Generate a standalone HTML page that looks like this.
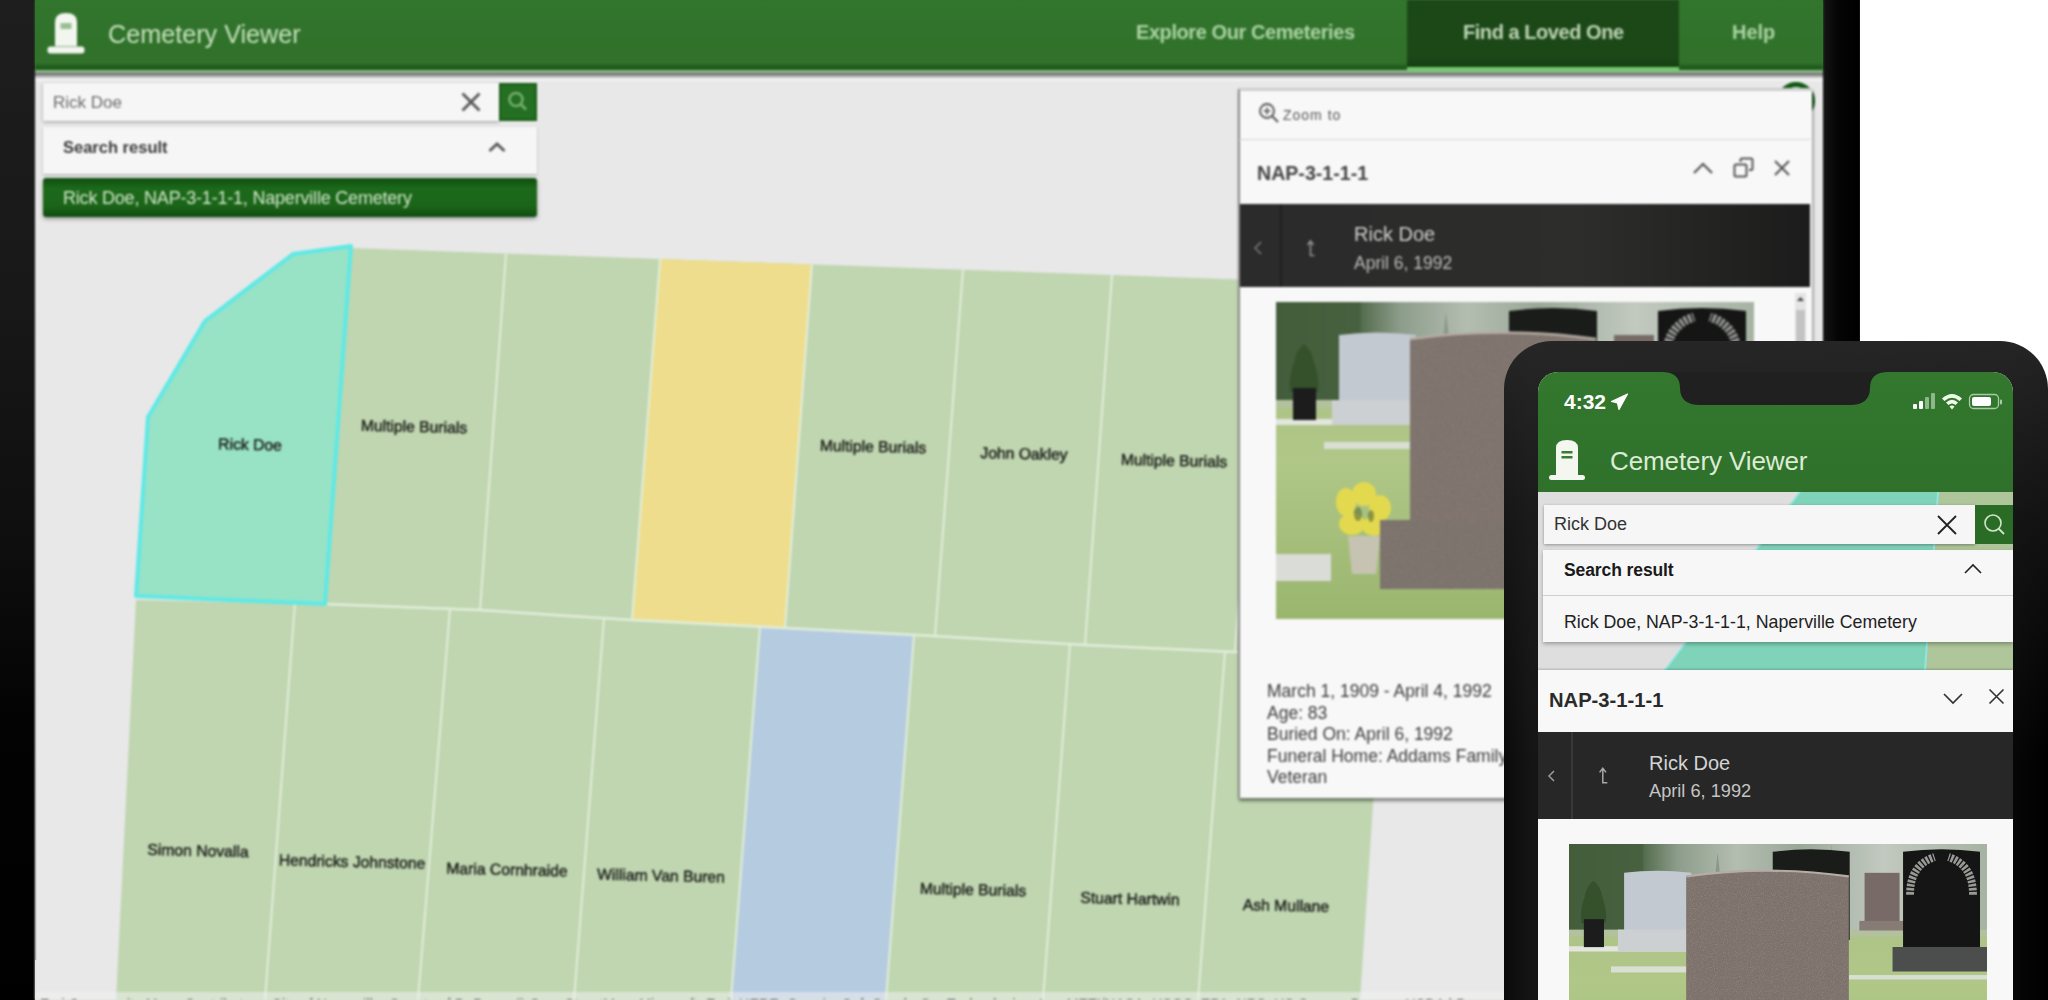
<!DOCTYPE html>
<html><head><meta charset="utf-8">
<style>
*{margin:0;padding:0;box-sizing:border-box}
html,body{width:2048px;height:1000px;overflow:hidden;background:#fff;font-family:"Liberation Sans",sans-serif}
.a{position:absolute}
#desk{left:0;top:0;width:1860px;height:1000px;background:#111}
#lbez{left:0;top:0;width:35px;height:1000px;background:linear-gradient(#1e1e1e 0%,#181818 30%,#0e0e0e 55%,#030303 72%,#000 100%)}
#rbez{left:1823px;top:0;width:36px;height:1000px;background:linear-gradient(90deg,#151515,#050505 40%,#000)}
#scr{left:35px;top:0;width:1788px;height:1000px;background:#e8e8e8;overflow:hidden;filter:blur(0.8px)}
#hdr{left:0;top:0;width:1788px;height:70px;background:linear-gradient(#32752d,#31712b 90%,#1e5a1a 96%)}
.nav{color:#acd4a4;font-weight:bold;font-size:20px;white-space:nowrap}
#tab{left:1372px;top:0;width:272px;height:71px;background:linear-gradient(#1c4818 85%,#143f12);border-bottom:4px solid #74c96e}
.txt{white-space:nowrap;line-height:1}
</style></head><body>
<div id="desk" class="a">
  <div id="lbez" class="a"></div>
  <div id="rbez" class="a"></div>
  <div class="a" style="left:35px;top:0;width:1788px;height:70px;background:#32752d"></div>
  <div class="a" style="left:35px;top:960px;width:1788px;height:40px;background:#d4e0cc"></div>
  <div id="scr" class="a">
    <!-- map -->
    <svg class="a" style="left:0;top:0" width="1788" height="1000" viewBox="35 0 1788 1000">
<polygon points="351.0,248.0 1420.0,285.9 1383.0,655.0 1360.0,1000.0 116.0,1000.0 136.0,600.0 325.0,604.0" fill="#bfd6b0"/>
<polygon points="660.0,259.0 812.0,264.4 785.0,628.0 632.0,620.0" fill="#eedd8d"/>
<polygon points="760.0,626.7 914.0,634.9 886.0,1000.0 731.0,1000.0" fill="#b5cbe0"/>
<line x1="506.0" y1="253.5" x2="480.0" y2="610.0" stroke="#e2eedb" stroke-width="2"/>
<line x1="660.0" y1="259.0" x2="632.0" y2="620.0" stroke="#e2eedb" stroke-width="2"/>
<line x1="812.0" y1="264.4" x2="785.0" y2="628.0" stroke="#e2eedb" stroke-width="2"/>
<line x1="963.0" y1="269.7" x2="935.0" y2="636.0" stroke="#e2eedb" stroke-width="2"/>
<line x1="1112.0" y1="275.0" x2="1085.0" y2="645.0" stroke="#e2eedb" stroke-width="2"/>
<line x1="1262.0" y1="280.3" x2="1235.0" y2="652.0" stroke="#e2eedb" stroke-width="2"/>
<line x1="295.0" y1="602.4" x2="265.0" y2="1000.0" stroke="#e2eedb" stroke-width="2"/>
<line x1="450.0" y1="608.8" x2="418.0" y2="1000.0" stroke="#e2eedb" stroke-width="2"/>
<line x1="604.0" y1="618.2" x2="574.0" y2="1000.0" stroke="#e2eedb" stroke-width="2"/>
<line x1="760.0" y1="626.7" x2="731.0" y2="1000.0" stroke="#e2eedb" stroke-width="2"/>
<line x1="914.0" y1="634.9" x2="886.0" y2="1000.0" stroke="#e2eedb" stroke-width="2"/>
<line x1="1070.0" y1="644.1" x2="1043.0" y2="1000.0" stroke="#e2eedb" stroke-width="2"/>
<line x1="1225.0" y1="651.5" x2="1198.0" y2="1000.0" stroke="#e2eedb" stroke-width="2"/>
<polyline points="136.0,594.0 325.0,604.0 480.0,610.0 632.0,620.0 785.0,628.0 935.0,636.0 1085.0,645.0 1235.0,652.0 1390.0,659.5" fill="none" stroke="#e2eedb" stroke-width="2.5"/>
<polygon points="293.0,254.0 351.0,246.0 325.0,604.0 136.0,596.0 148.0,417.0 205.0,321.0" fill="#98e2c6" stroke="#5fe9e6" stroke-width="4" stroke-linejoin="round"/>
<g font-family="Liberation Sans" font-size="15.7" fill="#1c1f1a" stroke="#1c1f1a" stroke-width="0.45" text-anchor="middle">
<text x="250" y="450" transform="rotate(1.3 250 445)">Rick Doe</text>
<text x="414" y="432" transform="rotate(1.3 414 427)">Multiple Burials</text>
<text x="873" y="452" transform="rotate(1.3 873 447)">Multiple Burials</text>
<text x="1024" y="459" transform="rotate(1.3 1024 454)">John Oakley</text>
<text x="1174" y="466" transform="rotate(1.3 1174 461)">Multiple Burials</text>
<text x="198" y="856" transform="rotate(1.3 198 851)">Simon Novalla</text>
<text x="352" y="867" transform="rotate(1.3 352 862)">Hendricks Johnstone</text>
<text x="507" y="875" transform="rotate(1.3 507 870)">Maria Cornhraide</text>
<text x="661" y="881" transform="rotate(1.3 661 876)">William Van Buren</text>
<text x="973" y="895" transform="rotate(1.3 973 890)">Multiple Burials</text>
<text x="1130" y="904" transform="rotate(1.3 1130 899)">Stuart Hartwin</text>
<text x="1286" y="911" transform="rotate(1.3 1286 906)">Ash Mullane</text>
</g>
    </svg>

    <div class="a" style="left:0;top:992px;width:1788px;height:10px;background:rgba(240,240,240,.55)"></div>
    <div class="a txt" style="left:5px;top:997px;font-size:14px;color:#5a5a5a;letter-spacing:0.2px">Esri Community Maps Contributors, City of Naperville, County of DuPage, &#169; OpenStreetMap, Microsoft, Esri, HERE, Garmin, SafeGraph, GeoTechnologies, Inc, METI/NASA, USGS, EPA, NPS, US Census Bureau, USDA | Powered by Esri</div>
    <!-- header shadow -->
    <div class="a" style="left:0;top:70px;width:1788px;height:3px;background:#8fb48a"></div>
    <div class="a" style="left:0;top:73px;width:1788px;height:5px;background:linear-gradient(#5f615f,#9a9a9a 50%,#dcdcdc)"></div>
    <div class="a" style="left:0;top:79px;width:1788px;height:2px;background:#f2f2f2"></div>
    <!-- search widget -->
    <div class="a" style="left:8px;top:83px;width:456px;height:38px;background:#f6f6f6;box-shadow:0 1px 3px rgba(0,0,0,.35)"></div>
    <div class="a txt" style="left:18px;top:94px;font-size:17px;color:#6b6b6b">Rick Doe</div>
    <svg class="a" style="left:424px;top:91px" width="24" height="22" viewBox="0 0 24 22"><path d="M3.5 2.5L20.5 19.5M20.5 2.5L3.5 19.5" stroke="#585858" stroke-width="2.8"/></svg>
    <div class="a" style="left:464px;top:83px;width:38px;height:38px;background:#246f21;border:2px solid #1a5c17"></div>
    <svg class="a" style="left:470px;top:89px" width="26" height="26" viewBox="0 0 26 26"><circle cx="11" cy="10.5" r="6.5" fill="none" stroke="#74ad6e" stroke-width="2.6"/><path d="M16 15.5L21 20.5" stroke="#74ad6e" stroke-width="2.8"/></svg>
    <div class="a" style="left:8px;top:127px;width:494px;height:47px;background:#f6f6f6;box-shadow:0 1px 2px rgba(0,0,0,.3)"></div>
    <div class="a txt" style="left:28px;top:139px;font-size:16.5px;font-weight:bold;color:#3a3a3a">Search result</div>
    <svg class="a" style="left:451px;top:139px" width="22" height="14" viewBox="0 0 22 14"><path d="M3.5 12L11 5L18.5 12" fill="none" stroke="#585858" stroke-width="2.8"/></svg>
    <div class="a" style="left:8px;top:178px;width:494px;height:39px;border-radius:3px;background:linear-gradient(180deg,#0f4d10 0%,#1d6a1b 28%,#1b6519 72%,#0e4c0f 100%);box-shadow:0 2px 4px rgba(0,0,0,.35)"></div>
    <div class="a txt" style="left:28px;top:189px;font-size:18px;color:#d3e6cc;letter-spacing:-0.2px">Rick Doe, NAP-3-1-1-1, Naperville Cemetery</div>

    <!-- green circle -->
    <div class="a" style="left:1742px;top:82px;width:38px;height:38px;border-radius:50%;border:5px solid #0f5a14;background:#e4e4e4"></div>
    <!-- popup -->
    <div class="a" style="left:1203px;top:88px;width:574px;height:710px;background:#f8f8f8;border-top:3px solid #cfcfcf;border-left:2px solid #8a8a8a;box-shadow:1px 3px 3px rgba(0,0,0,.45)"></div>
    <div class="a" style="left:1204px;top:139px;width:571px;height:1px;background:#d5d5d5"></div>
    <svg class="a" style="left:1222px;top:101px" width="26" height="26" viewBox="0 0 26 26"><circle cx="10" cy="10" r="7" fill="none" stroke="#555" stroke-width="1.8"/><path d="M10 6.5V13.5M6.5 10H13.5" stroke="#555" stroke-width="1.6"/><path d="M15 15L21 21" stroke="#555" stroke-width="2"/></svg>
    <div class="a txt" style="left:1248px;top:108px;font-size:14px;color:#555;letter-spacing:1px">Zoom to</div>
    <div class="a txt" style="left:1222px;top:164px;font-size:19.6px;font-weight:bold;color:#444">NAP-3-1-1-1</div>
    <svg class="a" style="left:1656px;top:158px" width="24" height="18" viewBox="0 0 24 18"><path d="M3 15L12 6L21 15" fill="none" stroke="#555" stroke-width="2.2"/></svg>
    <svg class="a" style="left:1697px;top:156px" width="24" height="24" viewBox="0 0 24 24"><rect x="2.5" y="8.5" width="12" height="12" rx="1.5" fill="#f8f8f8" stroke="#555" stroke-width="2"/><path d="M8.5 6V4Q8.5 2.5 10 2.5H19Q20.5 2.5 20.5 4V12.5Q20.5 14 19 14H17" fill="none" stroke="#555" stroke-width="2"/></svg>
    <svg class="a" style="left:1737px;top:158px" width="20" height="20" viewBox="0 0 20 20"><path d="M3 3L17 17M17 3L3 17" stroke="#555" stroke-width="2"/></svg>
    <div class="a" style="left:1205px;top:204px;width:570px;height:83px;background:linear-gradient(90deg,#2b2b2b 0%,#2d2d2b 60%,#1c1c1c 100%)"></div>
    <div class="a" style="left:1245px;top:204px;width:2px;height:83px;background:#1f1f1f"></div>
    <svg class="a" style="left:1217px;top:240px" width="12" height="16" viewBox="0 0 12 16"><path d="M9 2L3 8L9 14" fill="none" stroke="#777" stroke-width="1.6"/></svg>
    <svg class="a" style="left:1268px;top:236px" width="16" height="24" viewBox="0 0 16 24"><path d="M4.5 9L7.5 5L10.5 9M7.5 5.5V19.5H11.5" fill="none" stroke="#8c8c8c" stroke-width="1.7"/></svg>
    <div class="a txt" style="left:1319px;top:224px;font-size:20px;color:#cfcfcf">Rick Doe</div>
    <div class="a txt" style="left:1319px;top:255px;font-size:17.5px;color:#bdbdbd">April 6, 1992</div>
<svg class="a" style="left:1241px;top:302px" width="478" height="317" viewBox="0 0 478 317" preserveAspectRatio="none">
<defs>
<linearGradient id="gsky" x1="0" y1="0" x2="1" y2="0"><stop offset="0" stop-color="#46613f"/><stop offset="0.17" stop-color="#4f6848"/><stop offset="0.26" stop-color="#8d9d8b"/><stop offset="0.4" stop-color="#b3bdb0"/><stop offset="0.55" stop-color="#9aa898"/><stop offset="0.75" stop-color="#c2c9c0"/><stop offset="1" stop-color="#a6b3a2"/></linearGradient>
<linearGradient id="ggrass" x1="0" y1="0" x2="0" y2="1"><stop offset="0" stop-color="#a8bf84"/><stop offset="0.5" stop-color="#b0c788"/><stop offset="1" stop-color="#9ab66e"/></linearGradient>
<filter id="noise" x="0" y="0" width="100%" height="100%"><feTurbulence type="fractalNoise" baseFrequency="0.8" numOctaves="2" seed="3"/><feColorMatrix type="matrix" values="0 0 0 0 0.35  0 0 0 0 0.3  0 0 0 0 0.28  0 0 0 2 -0.9"/><feComposite in2="SourceGraphic" operator="in"/></filter>
</defs>
<rect width="478" height="317" fill="url(#ggrass)"/>
<rect width="478" height="104" fill="url(#gsky)"/>
<path d="M0 0H85V104H0Z" fill="#3f5a38" opacity="0.5"/>
<path d="M100 20L112 104H92Z M170 10L180 104H160Z M300 0L306 104H294Z" fill="#6d7e69" opacity="0.5"/>
<rect x="0" y="98" width="478" height="8" fill="#b3c19e"/>
<rect x="0" y="117" width="140" height="6" fill="#e2e6de"/>
<rect x="48" y="140" width="88" height="7" fill="#d9dfd2"/>
<rect x="320" y="150" width="158" height="5" fill="#d9dfd2"/>
<rect x="320" y="208" width="158" height="6" fill="#dadfd2"/>
<!-- potted plant -->
<path d="M28 42Q36 48 38 60Q44 76 42 90Q28 96 14 90Q12 76 18 60Q20 48 28 42Z" fill="#34512c"/>
<rect x="17" y="86" width="23" height="32" fill="#1c1c1c"/>
<!-- light gray headstone -->
<path d="M63 33Q100 28 140 33V100H63Z" fill="#c3c9d1"/>
<rect x="56" y="98" width="84" height="25" fill="#cdd0d3"/>
<!-- black stone behind -->
<path d="M233 9Q277 3 321 9V110H233Z" fill="#1a1c1a"/>
<!-- small brown stone -->
<rect x="338" y="33" width="40" height="58" fill="#786b67"/>
<rect x="332" y="88" width="52" height="11" fill="#877b76"/>
<!-- big black right stone -->
<path d="M382 9Q426 3 470 9V118H382Z" fill="#141514"/>
<path d="M390 58Q390 24 418 15 M462 58Q462 24 434 15" fill="none" stroke="#c4c7c2" stroke-width="9" stroke-dasharray="3 1.5" opacity="0.75"/>
<path d="M370 118H478V146H370Z" fill="#4b4e4d"/>
<!-- flowers -->
<g fill="#e2d94f"><ellipse cx="70" cy="200" rx="10" ry="14"/><ellipse cx="88" cy="192" rx="12" ry="12"/><ellipse cx="104" cy="206" rx="11" ry="13"/><ellipse cx="76" cy="222" rx="13" ry="11"/><ellipse cx="98" cy="224" rx="12" ry="10"/></g>
<g fill="#6b7a3a" opacity="0.7"><ellipse cx="82" cy="212" rx="4" ry="7"/><ellipse cx="95" cy="214" rx="3" ry="6"/></g>
<path d="M72 234H104L100 272H76Z" fill="#c6c3b3"/>
<!-- slab -->
<rect x="0" y="252" width="55" height="27" fill="#dadcd8"/>
<!-- big brown stone -->
<path d="M104 218H330V287H104Z" fill="#7a716a"/>
<path d="M104 218H330V287H104Z" fill="#7a716a" filter="url(#noise)" opacity="0.6"/>
<path d="M134 37Q226 24 320 37V220H134Z" fill="#7d726b"/>
<path d="M134 37Q226 24 320 37V220H134Z" fill="#7d726b" filter="url(#noise)" opacity="0.6"/>
<path d="M134 37Q226 24 320 37" fill="none" stroke="#b5aca4" stroke-width="2.5"/>
</svg>

    <div class="a" style="left:1760px;top:293px;width:11px;height:50px;background:#e4e4e4"></div>
    <div class="a" style="left:1761px;top:310px;width:9px;height:33px;background:#c3c3c3"></div>
    <svg class="a" style="left:1760px;top:294px" width="11" height="10" viewBox="0 0 11 10"><path d="M2 7L5.5 3L9 7Z" fill="#444"/></svg>
    <div class="a" style="left:1232px;top:681px;font-size:17.5px;line-height:21.5px;color:#3c3c3c;white-space:nowrap">March 1, 1909 - April 4, 1992<br>Age: 83<br>Buried On: April 6, 1992<br>Funeral Home: Addams Family Funeral Home<br>Veteran</div>
    <!-- header -->
    <div id="hdr" class="a">
      <div id="tab" class="a"></div>
      <svg class="a" style="left:12px;top:12px" width="40" height="44" viewBox="0 0 40 44"><path d="M8 34V10Q8 1 19 1Q30 1 30 10V34Z" fill="#f2f6ef"/><rect x="13.5" y="11" width="11" height="6" fill="#9bbf94"/><rect x="0.5" y="34.5" width="37" height="7" rx="3" fill="#f2f6ef"/></svg>
      <div class="a txt" style="left:73px;top:22px;font-size:25.2px;color:#c6e1bd">Cemetery Viewer</div>
      <div class="a txt nav" style="left:1101px;top:22px;letter-spacing:-0.42px">Explore Our Cemeteries</div>
      <div class="a txt nav" style="left:1428px;top:22px;color:#c0d6b8;letter-spacing:-0.45px">Find a Loved One</div>
      <div class="a txt nav" style="left:1697px;top:22px">Help</div>
    </div>
  </div>
</div>

<!-- phone -->
<div class="a" id="phone" style="left:1504px;top:341px;width:544px;height:700px;border-radius:48px 48px 0 0;background:linear-gradient(180deg,rgba(40,40,40,.9) 0%,rgba(30,30,30,.6) 25%,rgba(0,0,0,0) 60%),linear-gradient(90deg,#0a0a0a 0%,#151515 5%,#111 50%,#080808 92%,#000 100%)"></div>
<div class="a" id="pscr" style="left:1538px;top:372px;width:475px;height:640px;border-radius:20px 20px 0 0;background:#f8f8f8;overflow:hidden">
  <div class="a" style="left:0;top:0;width:475px;height:120px;background:linear-gradient(#33782e,#2f712b)"></div>
  <!-- notch -->
  <svg class="a" style="left:0;top:0" width="475" height="40" viewBox="0 0 475 40"><path d="M124,0 Q142,0 142,16 Q142,33 162,33 L312,33 Q332,33 332,16 Q332,0 350,0 Z" fill="#202020"/></svg>
  <div class="a txt" style="left:26px;top:19px;font-size:21px;font-weight:bold;color:#fff">4:32</div>
  <svg class="a" style="left:72px;top:20px" width="20" height="20" viewBox="0 0 20 20"><path d="M17.5 2L1.5 9.5L7.5 11L9 17.5Z" fill="#fff" stroke="#fff" stroke-width="1.2" stroke-linejoin="round"/></svg>
  <svg class="a" style="left:373px;top:19px" width="100" height="20" viewBox="0 0 100 20"><rect x="2" y="13" width="4" height="5" rx="1" fill="#fff"/><rect x="8" y="10" width="4" height="8" rx="1" fill="#fff"/><rect x="14" y="6" width="4" height="12" rx="1" fill="#8fb88a"/><rect x="20" y="2" width="4" height="16" rx="1" fill="#8fb88a"/><path d="M31 7.5Q41 -1.5 51 7.5L48.5 10Q41 3.5 33.5 10Z M35 11.5Q41 6 47 11.5L44.5 14Q41 11 37.5 14Z M38.5 15.5Q41 13.5 43.5 15.5L41 18.5Z" fill="#effbea"/><rect x="58.5" y="3.5" width="29" height="14" rx="4" fill="none" stroke="#a9cba4" stroke-width="1.3"/><rect x="61" y="6" width="19" height="9" rx="2" fill="#fff"/><rect x="89" y="8.5" width="2" height="5" rx="1" fill="#a9cba4"/></svg>
  <svg class="a" style="left:10px;top:66px" width="40" height="44" viewBox="0 0 40 44"><path d="M8 37V10Q8 2 19 2Q30 2 30 10V37Z" fill="#f3f7f0"/><rect x="13.5" y="13" width="11" height="2.5" fill="#3a7a35"/><rect x="13.5" y="18" width="11" height="2.5" fill="#3a7a35"/><rect x="1" y="37" width="36" height="5" rx="2.5" fill="#f3f7f0"/></svg>
  <div class="a txt" style="left:72px;top:76px;font-size:26px;color:#dcecd4;letter-spacing:-0.1px">Cemetery Viewer</div>
  <!-- map strips -->
  <div class="a" style="left:0;top:120px;width:475px;height:178px;background:#dedede"></div>
  <svg class="a" style="left:0;top:120px" width="475" height="178" viewBox="0 0 475 178"><polygon points="262,0 400,0 387,178 127,178" fill="#7fd3b8"/><polygon points="400,0 475,0 475,178 387,178" fill="#aec699"/><path d="M262 0L127 178" stroke="#8fe6e0" stroke-width="2"/><path d="M400 0L387 178" stroke="#8fe6e0" stroke-width="2"/></svg>
  <!-- search -->
  <div class="a" style="left:6px;top:133px;width:431px;height:39px;background:#f6f6f6;box-shadow:0 1px 3px rgba(0,0,0,.35)"></div>
  <div class="a txt" style="left:16px;top:143px;font-size:18px;color:#333">Rick Doe</div>
  <svg class="a" style="left:398px;top:142px" width="22" height="22" viewBox="0 0 22 22"><path d="M2 2L20 20M20 2L2 20" stroke="#222" stroke-width="1.8"/></svg>
  <div class="a" style="left:437px;top:133px;width:38px;height:39px;background:#2a6b26"></div>
  <svg class="a" style="left:444px;top:140px" width="26" height="26" viewBox="0 0 26 26"><circle cx="11" cy="11" r="8" fill="none" stroke="#cfe6c9" stroke-width="1.6"/><path d="M16.5 16.5L22 22" stroke="#cfe6c9" stroke-width="1.8"/></svg>
  <div class="a" style="left:5px;top:178px;width:470px;height:92px;background:#f7f7f7;box-shadow:0 2px 4px rgba(0,0,0,.3)"></div>
  <div class="a" style="left:5px;top:223px;width:470px;height:1px;background:#cfcfcf"></div>
  <div class="a txt" style="left:26px;top:190px;font-size:17.5px;font-weight:bold;color:#1a1a1a;letter-spacing:-0.1px">Search result</div>
  <svg class="a" style="left:424px;top:189px" width="22" height="14" viewBox="0 0 22 14"><path d="M3 12L11 4L19 12" fill="none" stroke="#222" stroke-width="1.6"/></svg>
  <div class="a txt" style="left:26px;top:242px;font-size:17.8px;color:#222">Rick Doe, NAP-3-1-1-1, Naperville Cemetery</div>
  <!-- NAP panel -->
  <div class="a" style="left:0;top:298px;width:475px;height:62px;background:#f8f8f8;box-shadow:0 -1px 2px rgba(0,0,0,.2)"></div>
  <div class="a txt" style="left:11px;top:318px;font-size:20.2px;font-weight:bold;color:#2a2a2a">NAP-3-1-1-1</div>
  <svg class="a" style="left:403px;top:318px" width="24" height="16" viewBox="0 0 24 16"><path d="M3 4L12 13L21 4" fill="none" stroke="#333" stroke-width="1.7"/></svg>
  <svg class="a" style="left:449px;top:315px" width="20" height="20" viewBox="0 0 20 20"><path d="M2.5 2.5L16.5 16.5M16.5 2.5L2.5 16.5" stroke="#333" stroke-width="1.6"/></svg>
  <div class="a" style="left:0;top:360px;width:475px;height:87px;background:#272727"></div>
  <div class="a" style="left:33px;top:360px;width:2px;height:87px;background:#383838"></div>
  <svg class="a" style="left:8px;top:396px" width="12" height="16" viewBox="0 0 12 16"><path d="M8 3L3 8L8 13" fill="none" stroke="#9a9a9a" stroke-width="1.5"/></svg>
  <svg class="a" style="left:56px;top:392px" width="16" height="26" viewBox="0 0 16 26"><path d="M5.6 8.4L8.8 4.2L12 8.4M8.8 4.5V18.7H13.3" fill="none" stroke="#a8a8a8" stroke-width="1.5"/></svg>
  <div class="a txt" style="left:111px;top:381px;font-size:20px;color:#d4d4d4">Rick Doe</div>
  <div class="a txt" style="left:111px;top:410px;font-size:18.2px;color:#c4c4c4">April 6, 1992</div>
<svg class="a" style="left:31px;top:472px" width="418" height="277" viewBox="0 0 478 317" preserveAspectRatio="none">
<defs>
<linearGradient id="gsky2" x1="0" y1="0" x2="1" y2="0"><stop offset="0" stop-color="#46613f"/><stop offset="0.17" stop-color="#4f6848"/><stop offset="0.26" stop-color="#8d9d8b"/><stop offset="0.4" stop-color="#b3bdb0"/><stop offset="0.55" stop-color="#9aa898"/><stop offset="0.75" stop-color="#c2c9c0"/><stop offset="1" stop-color="#a6b3a2"/></linearGradient>
<linearGradient id="ggrass2" x1="0" y1="0" x2="0" y2="1"><stop offset="0" stop-color="#a8bf84"/><stop offset="0.5" stop-color="#b0c788"/><stop offset="1" stop-color="#9ab66e"/></linearGradient>
<filter id="noise2" x="0" y="0" width="100%" height="100%"><feTurbulence type="fractalNoise" baseFrequency="0.8" numOctaves="2" seed="3"/><feColorMatrix type="matrix" values="0 0 0 0 0.35  0 0 0 0 0.3  0 0 0 0 0.28  0 0 0 2 -0.9"/><feComposite in2="SourceGraphic" operator="in"/></filter>
</defs>
<rect width="478" height="317" fill="url(#ggrass2)"/>
<rect width="478" height="104" fill="url(#gsky2)"/>
<path d="M0 0H85V104H0Z" fill="#3f5a38" opacity="0.5"/>
<path d="M100 20L112 104H92Z M170 10L180 104H160Z M300 0L306 104H294Z" fill="#6d7e69" opacity="0.5"/>
<rect x="0" y="98" width="478" height="8" fill="#b3c19e"/>
<rect x="0" y="117" width="140" height="6" fill="#e2e6de"/>
<rect x="48" y="140" width="88" height="7" fill="#d9dfd2"/>
<rect x="320" y="150" width="158" height="5" fill="#d9dfd2"/>
<rect x="320" y="208" width="158" height="6" fill="#dadfd2"/>
<!-- potted plant -->
<path d="M28 42Q36 48 38 60Q44 76 42 90Q28 96 14 90Q12 76 18 60Q20 48 28 42Z" fill="#34512c"/>
<rect x="17" y="86" width="23" height="32" fill="#1c1c1c"/>
<!-- light gray headstone -->
<path d="M63 33Q100 28 140 33V100H63Z" fill="#c3c9d1"/>
<rect x="56" y="98" width="84" height="25" fill="#cdd0d3"/>
<!-- black stone behind -->
<path d="M233 9Q277 3 321 9V110H233Z" fill="#1a1c1a"/>
<!-- small brown stone -->
<rect x="338" y="33" width="40" height="58" fill="#786b67"/>
<rect x="332" y="88" width="52" height="11" fill="#877b76"/>
<!-- big black right stone -->
<path d="M382 9Q426 3 470 9V118H382Z" fill="#141514"/>
<path d="M390 58Q390 24 418 15 M462 58Q462 24 434 15" fill="none" stroke="#c4c7c2" stroke-width="9" stroke-dasharray="3 1.5" opacity="0.75"/>
<path d="M370 118H478V146H370Z" fill="#4b4e4d"/>
<!-- flowers -->
<g fill="#e2d94f"><ellipse cx="70" cy="200" rx="10" ry="14"/><ellipse cx="88" cy="192" rx="12" ry="12"/><ellipse cx="104" cy="206" rx="11" ry="13"/><ellipse cx="76" cy="222" rx="13" ry="11"/><ellipse cx="98" cy="224" rx="12" ry="10"/></g>
<g fill="#6b7a3a" opacity="0.7"><ellipse cx="82" cy="212" rx="4" ry="7"/><ellipse cx="95" cy="214" rx="3" ry="6"/></g>
<path d="M72 234H104L100 272H76Z" fill="#c6c3b3"/>
<!-- slab -->
<rect x="0" y="252" width="55" height="27" fill="#dadcd8"/>
<!-- big brown stone -->
<path d="M104 218H330V287H104Z" fill="#7a716a"/>
<path d="M104 218H330V287H104Z" fill="#7a716a" filter="url(#noise2)" opacity="0.6"/>
<path d="M134 37Q226 24 320 37V220H134Z" fill="#7d726b"/>
<path d="M134 37Q226 24 320 37V220H134Z" fill="#7d726b" filter="url(#noise2)" opacity="0.6"/>
<path d="M134 37Q226 24 320 37" fill="none" stroke="#b5aca4" stroke-width="2.5"/>
</svg>

</div>
</body></html>
